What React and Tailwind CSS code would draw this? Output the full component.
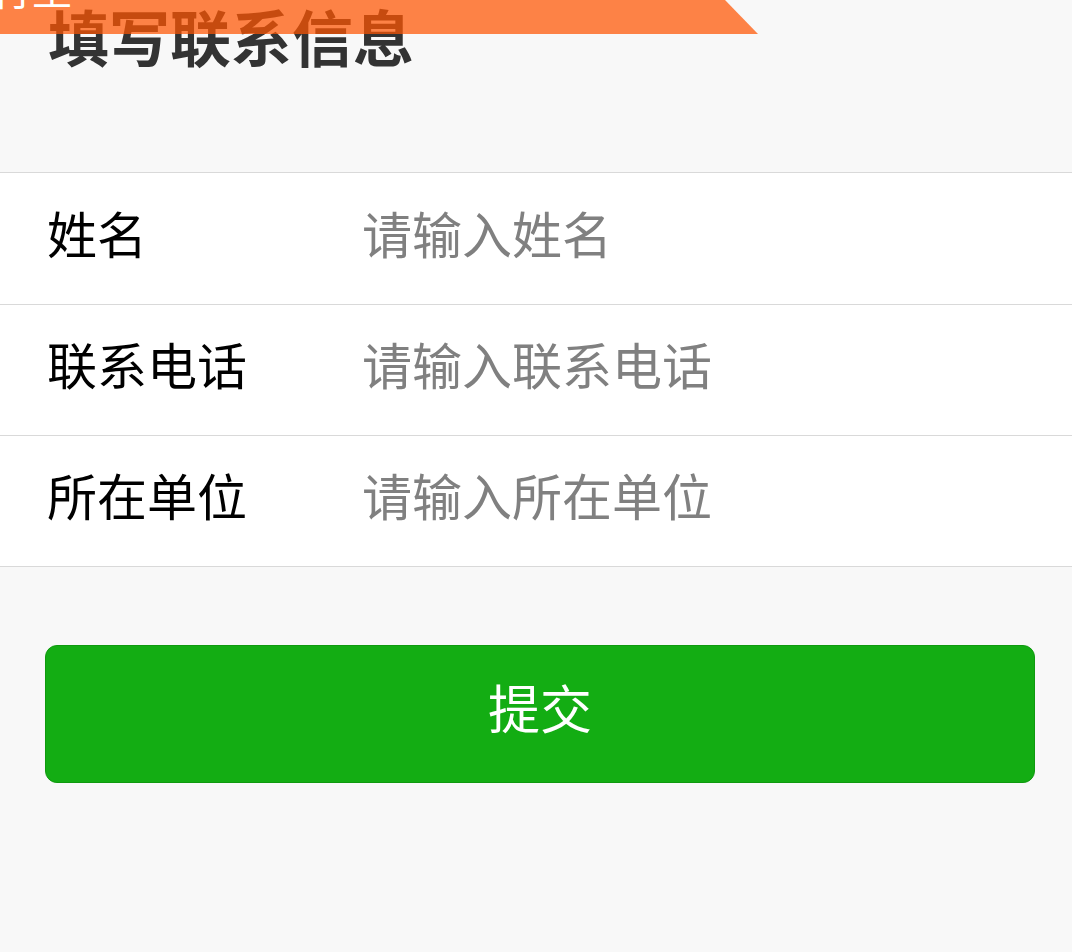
export default function App() {
  const rows = [
    ["姓名", "请输入姓名"],
    ["联系电话", "请输入联系电话"],
    ["所在单位", "请输入所在单位"],
  ];
  return (
    <div
      className="relative w-[1072px] h-[952px] bg-[#f8f8f8] overflow-hidden"
      style={{ fontFamily: '"Noto Sans CJK SC", "Noto Sans", sans-serif' }}
    >
      <div className="h-[172px] pl-[48px] pt-[2px]">
        <h1 className="text-[61px] leading-[68px] font-bold text-[#333333]">填写联系信息</h1>
      </div>
      <div className="bg-white border-t border-b border-[#d9d9d9]">
        {rows.map(([label, ph], i) => (
          <div
            key={label}
            className={`flex items-center h-[131px] pb-[14px] ${i > 0 ? "border-t border-[#d9d9d9]" : ""}`}
          >
            <div className="w-[362px] pl-[47px] text-[50px] leading-none text-black">{label}</div>
            <input
              placeholder={ph}
              className="flex-1 bg-transparent outline-none text-[50px] leading-none text-black placeholder:text-[#808080]"
              style={{ fontFamily: '"Noto Sans CJK SC", "Noto Sans", sans-serif' }}
            />
          </div>
        ))}
      </div>
      <div className="px-[45px] pt-[78px]">
        <button
          className="w-[990px] h-[138px] pb-[14px] rounded-[12px] bg-[#13ad13] border border-[#0f9a0f] text-white text-[52px] leading-none"
          style={{ fontFamily: '"Noto Sans CJK SC", "Noto Sans", sans-serif' }}
        >
          提交
        </button>
      </div>
      <div className="absolute left-0 top-0 w-[760px] h-[34px] pointer-events-none">
        <svg width="760" height="34" className="absolute left-0 top-0">
          <polygon points="0,0 725,0 758,34 0,34" fill="#ff5402" fillOpacity="0.72" />
        </svg>
        <div className="absolute left-[-8px] top-[-32px] text-[40px] leading-none text-white whitespace-nowrap">
          行至
        </div>
      </div>
    </div>
  );
}
